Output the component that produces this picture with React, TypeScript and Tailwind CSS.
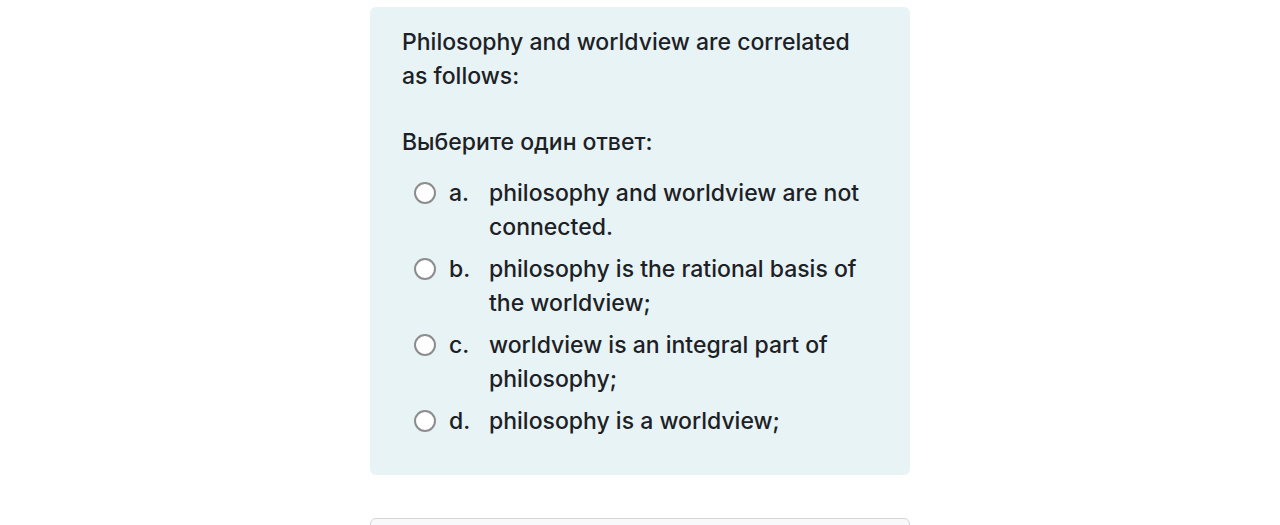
import React from 'react'

const OPTIONS = [
  { key: 'a.', text: 'philosophy and worldview are not connected.' },
  { key: 'b.', text: 'philosophy is the rational basis of the worldview;' },
  { key: 'c.', text: 'worldview is an integral part of philosophy;' },
  { key: 'd.', text: 'philosophy is a worldview;' },
]

export default function App() {
  return (
    <div className="h-[525px] bg-white overflow-hidden" style={{ fontFamily: 'Inter, "Noto Sans", sans-serif' }}>
      <div className="mx-auto w-[540px] pt-[7px]">
        {/* Question card */}
        <div className="rounded-md bg-[#e7f3f5] pl-8 pr-6 pt-[18px] pb-[37px] text-[23px] leading-[34px] font-medium text-[#1d2125]">
          <p className="pr-8">Philosophy and worldview are correlated as follows:</p>
          <p className="mt-8">Выберите один ответ:</p>
          <div className="mt-[17px] flex flex-col gap-2 pl-3">
            {OPTIONS.map((o) => (
              <div key={o.key} className="flex items-start">
                <span className="mt-[6px] w-[22px] h-[22px] shrink-0 rounded-full border-2 border-[#8d8d8d] bg-white" />
                <span className="ml-[13px] w-[40px] shrink-0">{o.key}</span>
                <span className="w-[380px]">{o.text}</span>
              </div>
            ))}
          </div>
        </div>
        {/* Next card */}
        <div className="mt-[43px] h-[40px] rounded-md border border-[#d5d5d5] bg-[#f8f9fa]" />
      </div>
    </div>
  )
}
